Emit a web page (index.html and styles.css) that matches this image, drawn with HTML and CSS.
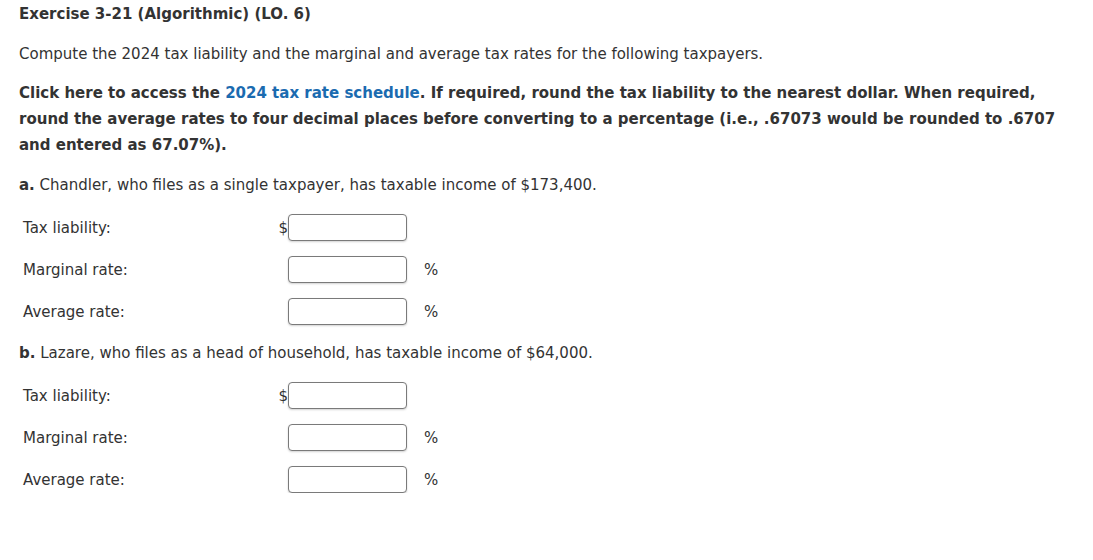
FILE: index.html
```html
<!DOCTYPE html>
<html>
<head>
<meta charset="utf-8">
<link rel="stylesheet" href="styles.css">
</head>
<body>
<div class="page">
  <h1 class="title">Exercise 3-21 (Algorithmic) (LO. 6)</h1>
  <p class="intro">Compute the 2024 tax liability and the marginal and average tax rates for the following taxpayers.</p>
  <p class="instr">Click here to access the <a class="link" href="#">2024 tax rate schedule</a>. If required, round the tax liability to the nearest dollar. When required, round the average rates to four decimal places before converting to a percentage (i.e., .67073 would be rounded to .6707 and entered as 67.07%).</p>

  <p class="part part-first"><b>a.</b> Chandler, who files as a single taxpayer, has taxable income of $173,400.</p>
  <div class="rows">
    <div class="row"><span class="label">Tax liability:</span><span class="pre">$</span><span class="box"></span><span class="post"></span></div>
    <div class="row"><span class="label">Marginal rate:</span><span class="pre"></span><span class="box"></span><span class="post">%</span></div>
    <div class="row"><span class="label">Average rate:</span><span class="pre"></span><span class="box"></span><span class="post">%</span></div>
  </div>

  <p class="part"><b>b.</b> Lazare, who files as a head of household, has taxable income of $64,000.</p>
  <div class="rows">
    <div class="row"><span class="label">Tax liability:</span><span class="pre">$</span><span class="box"></span><span class="post"></span></div>
    <div class="row"><span class="label">Marginal rate:</span><span class="pre"></span><span class="box"></span><span class="post">%</span></div>
    <div class="row"><span class="label">Average rate:</span><span class="pre"></span><span class="box"></span><span class="post">%</span></div>
  </div>
</div>
</body>
</html>
```
FILE: styles.css
```css
html, body {
  margin: 0;
  padding: 0;
  background: #fff;
}
body {
  font-family: "DejaVu Sans", Verdana, sans-serif;
  color: #333;
  font-size: 15px;
}
.page {
  padding: 4px 19px 0 19px;
  max-width: 1040px;
}
.title {
  font-size: 15px;
  font-weight: bold;
  margin: 0;
  line-height: 20px;
}
.intro {
  margin: 17px 0 0 0;
  line-height: 26px;
}
.instr {
  margin: 13px 0 0 0;
  line-height: 26px;
  font-weight: bold;
}
.link {
  color: #1b6bb0;
  text-decoration: none;
}
.part {
  margin: 15px 0 0 0;
  line-height: 26px;
}
.part-first {
  margin-top: 14px;
}
.rows {
  display: flex;
  flex-direction: column;
  gap: 15px;
  margin-top: 16px;
  padding-left: 4px;
}
.row {
  display: flex;
  align-items: center;
  height: 27px;
}
.label {
  width: 253px;
}
.pre {
  width: 12px;
  text-align: right;
}
.box {
  width: 117px;
  height: 25px;
  border: 1px solid #7a7a7a;
  border-radius: 4px;
  box-shadow: 0 1px 2px rgba(0,0,0,0.18);
  background: #fff;
}
.post {
  margin-left: 17px;
}
```
